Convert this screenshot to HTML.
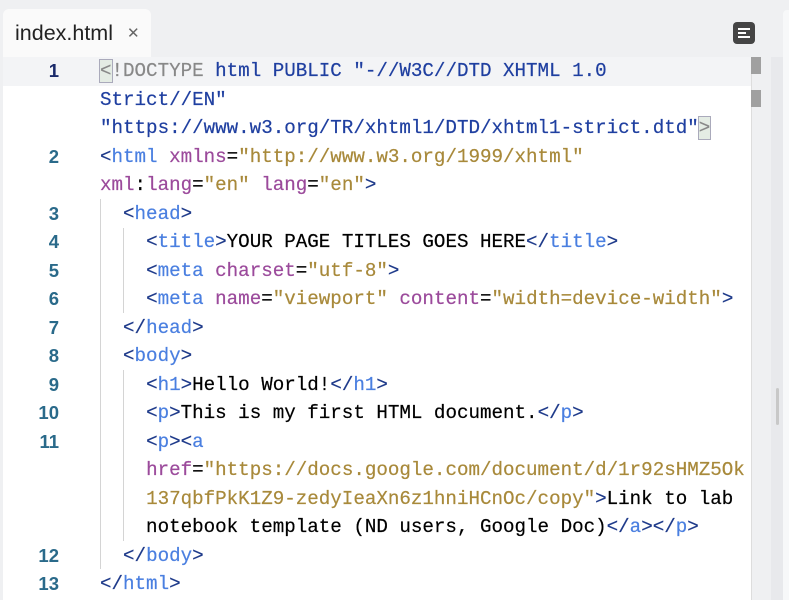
<!DOCTYPE html>
<html><head><style>
body{margin:0;width:789px;height:600px;overflow:hidden;background:#eff0f2;font-family:"Liberation Mono",monospace;position:relative}
.tab{position:absolute;left:3px;top:9px;width:148px;height:48px;background:#fafafa;border-radius:6px 6px 0 0;font-family:"Liberation Sans",sans-serif;font-size:21.5px;color:#222}
.tab span{position:absolute;left:12px;top:12px}
.tab i{position:absolute;left:124px;top:15px;font-style:normal;font-size:15px;color:#666}
.ed{position:absolute;left:3px;top:57px;width:748px;height:543px;background:#fff;border-right:1px solid #ddd}
.hl{position:absolute;left:0;top:0;width:748px;height:29px;background:#f3f4f6}
.r{position:absolute;left:97px;font-size:19.2px;white-space:pre;line-height:28.5px;height:28.5px;-webkit-text-stroke:0.2px}
.n{position:absolute;width:56px;text-align:right;left:0;font-size:18.5px;line-height:28.5px;color:#2a6a8a;font-family:"Liberation Sans",sans-serif;font-weight:bold}
.b{color:#1e3a8a}.t{color:#4a7fe0}.a{color:#9b4a9b}.s{color:#a8893a}.g{color:#888}.k{color:#1f3fa0}
.gd{position:absolute;width:1px;background:#d4d4d4}
</style></head><body>
<div class="tab"><span>index.html</span><i>✕</i></div>
<svg style="position:absolute;left:733px;top:22px" width="22" height="22"><rect width="22" height="22" rx="4" fill="#454545"/><rect x="5" y="6" width="12" height="2" fill="#fff"/><rect x="5" y="10" width="8" height="2" fill="#fff"/><rect x="5" y="14" width="12" height="2" fill="#fff"/></svg>
<div class="ed"><div class="hl"></div>
<div class="gd" style="left:97px;top:142px;height:370px"></div>
<div class="gd" style="left:120px;top:171px;height:85px"></div>
<div class="gd" style="left:120px;top:313px;height:171px"></div>
<div class="n" style="top:0;color:#1a2a6a">1</div>
<div class="n" style="top:86px">2</div>
<div class="n" style="top:143px">3</div>
<div class="n" style="top:171px">4</div>
<div class="n" style="top:200px">5</div>
<div class="n" style="top:228px">6</div>
<div class="n" style="top:257px">7</div>
<div class="n" style="top:285px">8</div>
<div class="n" style="top:314px">9</div>
<div class="n" style="top:342px">10</div>
<div class="n" style="top:371px">11</div>
<div class="n" style="top:485px">12</div>
<div class="n" style="top:513px">13</div>
<div class="r" style="top:0"><span class="g" style="background:#e4ece4;outline:1px solid #aab">&lt;</span><span class="g">!DOCTYPE</span> <span class="k">html PUBLIC "-//W3C//DTD XHTML 1.0</span></div>
<div class="r k" style="top:28.5px">Strict//EN"</div>
<div class="r" style="top:57px"><span class="k">"https://www.w3.org/TR/xhtml1/DTD/xhtml1-strict.dtd"</span><span class="g" style="background:#e4ece4;outline:1px solid #aab">&gt;</span></div>
<div class="r" style="top:85.5px"><span class="b">&lt;</span><span class="t">html</span> <span class="a">xmlns</span>=<span class="s">"http://www.w3.org/1999/xhtml"</span></div>
<div class="r" style="top:114px"><span class="a">xml</span>:<span class="a">lang</span>=<span class="s">"en"</span> <span class="a">lang</span>=<span class="s">"en"</span><span class="b">&gt;</span></div>
<div class="r" style="top:142.5px">  <span class="b">&lt;</span><span class="t">head</span><span class="b">&gt;</span></div>
<div class="r" style="top:171px">    <span class="b">&lt;</span><span class="t">title</span><span class="b">&gt;</span>YOUR PAGE TITLES GOES HERE<span class="b">&lt;/</span><span class="t">title</span><span class="b">&gt;</span></div>
<div class="r" style="top:199.5px">    <span class="b">&lt;</span><span class="t">meta</span> <span class="a">charset</span>=<span class="s">"utf-8"</span><span class="b">&gt;</span></div>
<div class="r" style="top:228px">    <span class="b">&lt;</span><span class="t">meta</span> <span class="a">name</span>=<span class="s">"viewport"</span> <span class="a">content</span>=<span class="s">"width=device-width"</span><span class="b">&gt;</span></div>
<div class="r" style="top:256.5px">  <span class="b">&lt;/</span><span class="t">head</span><span class="b">&gt;</span></div>
<div class="r" style="top:285px">  <span class="b">&lt;</span><span class="t">body</span><span class="b">&gt;</span></div>
<div class="r" style="top:313.5px">    <span class="b">&lt;</span><span class="t">h1</span><span class="b">&gt;</span>Hello World!<span class="b">&lt;/</span><span class="t">h1</span><span class="b">&gt;</span></div>
<div class="r" style="top:342px">    <span class="b">&lt;</span><span class="t">p</span><span class="b">&gt;</span>This is my first HTML document.<span class="b">&lt;/</span><span class="t">p</span><span class="b">&gt;</span></div>
<div class="r" style="top:370.5px">    <span class="b">&lt;</span><span class="t">p</span><span class="b">&gt;&lt;</span><span class="t">a</span></div>
<div class="r" style="top:399px">    <span class="a">href</span>=<span class="s">"https://docs.google.com/document/d/1r92sHMZ5Ok</span></div>
<div class="r" style="top:427.5px">    <span class="s">137qbfPkK1Z9-zedyIeaXn6z1hniHCnOc/copy"</span><span class="b">&gt;</span>Link to lab</div>
<div class="r" style="top:456px">    notebook template (ND users, Google Doc)<span class="b">&lt;/</span><span class="t">a</span><span class="b">&gt;&lt;/</span><span class="t">p</span><span class="b">&gt;</span></div>
<div class="r" style="top:484.5px">  <span class="b">&lt;/</span><span class="t">body</span><span class="b">&gt;</span></div>
<div class="r" style="top:513px"><span class="b">&lt;/</span><span class="t">html</span><span class="b">&gt;</span></div>
<div style="position:absolute;left:748px;top:0;width:10px;height:17px;background:#a0a0a0"></div>
<div style="position:absolute;left:748px;top:33px;width:10px;height:17px;background:#a0a0a0"></div>
</div>
<div style="position:absolute;left:771px;top:57px;width:12px;height:543px;background:#e8e9ec"></div>
<div style="position:absolute;left:776px;top:388px;width:3px;height:37px;background:#c8c8c8;border-radius:2px"></div>
<div style="position:absolute;left:783px;top:10px;width:6px;height:590px;background:#f7f8f9;border-radius:4px 0 0 0"></div>
</body></html>
